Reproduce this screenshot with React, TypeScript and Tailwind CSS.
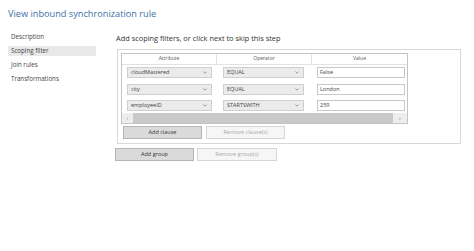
import React from 'react'

const rows = [
  { attribute: 'cloudMastered', operator: 'EQUAL', value: 'False' },
  { attribute: 'city', operator: 'EQUAL', value: 'London' },
  { attribute: 'employeeID', operator: 'STARTSWITH', value: '259' },
]

const sideItems = ['Description', 'Scoping filter', 'Join rules', 'Transformations']

function Chevron() {
  return (
    <svg width="4" height="3" viewBox="0 0 4 3" className="shrink-0">
      <path d="M0.4 0.6 L2 2.2 L3.6 0.6" fill="none" stroke="#777" strokeWidth="0.7" />
    </svg>
  )
}

function Select({ text }: { text: string }) {
  return (
    <div className="h-[11px] flex items-center justify-between border border-[#cfcfcf] bg-[#ebebeb] pl-[3px] pr-[4px] text-[5.5px] text-[#444]">
      <span>{text}</span>
      <Chevron />
    </div>
  )
}

export default function App() {
  return (
    <div className="w-[474px] h-[251px] bg-white overflow-hidden" style={{ fontFamily: '"Open Sans", "Noto Sans", sans-serif' }}>
      <div className="pt-[7px] pl-[8px] h-[21px] text-[9.2px] leading-[14px] text-[#3d6fa8]">
        View inbound synchronization rule
      </div>

      <div className="flex mt-[11px]">
        <div className="w-[88px] ml-[8px] flex flex-col gap-[4px]">
          {sideItems.map((item) => (
            <div
              key={item}
              className={`h-[10px] leading-[10px] pl-[3px] text-[6.2px] text-[#444] ${item === 'Scoping filter' ? 'bg-[#e9e9e9]' : ''}`}
            >
              {item}
            </div>
          ))}
        </div>

        <div className="ml-[19px] flex flex-col">
          <div className="h-[12px] leading-[12px] pl-[1px] text-[7.4px] text-[#333]">
            Add scoping filters, or click next to skip this step
          </div>

          <div className="mt-[5px] ml-[2px] w-[344px] border border-[#d8d8d8] px-[3px] pt-[3px] pb-[4px]">
            <div className="w-[287px] border border-[#c4c4c4]">
              <div className="grid grid-cols-[95px_95px_95px] h-[11px] border-b border-[#e2e2e2] text-[5px] text-[#555]">
                <div className="flex items-center justify-center border-r border-[#e2e2e2]">Attribute</div>
                <div className="flex items-center justify-center border-r border-[#e2e2e2]">Operator</div>
                <div className="flex items-center justify-center">Value</div>
              </div>

              <div className="flex flex-col gap-[5.5px] pt-[2px]">
                {rows.map((row) => (
                  <div key={row.attribute} className="grid grid-cols-[95px_95px_95px]">
                    <div className="pl-[5px] pr-[5px]">
                      <Select text={row.attribute} />
                    </div>
                    <div className="pl-[6px] pr-[8px]">
                      <Select text={row.operator} />
                    </div>
                    <div className="pl-[5px] pr-[2px]">
                      <div className="h-[11px] flex items-center border border-[#c8c8c8] bg-white pl-[2px] text-[5.5px] text-[#444]">
                        {row.value}
                      </div>
                    </div>
                  </div>
                ))}
              </div>

              <div className="mt-[2px] h-[10px] flex text-[6px] text-[#777]">
                <div className="w-[11px] flex items-center justify-center bg-[#ededed]">‹</div>
                <div className="flex-1 bg-[#c9c9c9]" />
                <div className="w-[14px] flex items-center justify-center bg-[#ededed]">›</div>
              </div>
            </div>

            <div className="mt-[2px] ml-[2px] flex gap-[4px] text-[5.5px]">
              <div className="w-[79px] h-[13px] flex items-center justify-center border border-[#b5b5b5] bg-[#dadada] text-[#333]">
                Add clause
              </div>
              <div className="w-[79px] h-[13px] flex items-center justify-center border border-[#d6d6d6] bg-[#f6f6f6] text-[#aaa]">
                Remove clause(s)
              </div>
            </div>
          </div>

          <div className="mt-[4px] flex gap-[3px] text-[5.5px]">
            <div className="w-[79px] h-[13px] flex items-center justify-center border border-[#b5b5b5] bg-[#dadada] text-[#333]">
              Add group
            </div>
            <div className="w-[80px] h-[13px] flex items-center justify-center border border-[#d6d6d6] bg-[#f6f6f6] text-[#aaa]">
              Remove group(s)
            </div>
          </div>
        </div>
      </div>
    </div>
  )
}
